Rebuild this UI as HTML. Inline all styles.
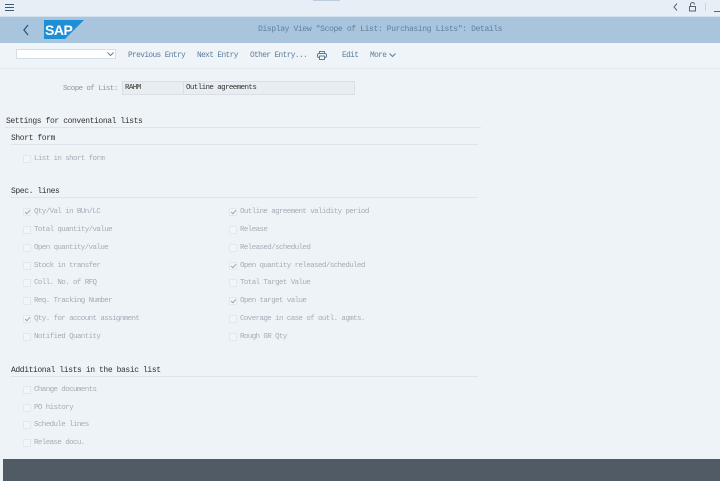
<!DOCTYPE html>
<html><head><meta charset="utf-8"><style>
*{margin:0;padding:0;box-sizing:border-box}
body{width:720px;height:481px;overflow:hidden;background:#eef3f8;font-family:"Liberation Mono","Noto Sans CJK SC",monospace;font-size:7.5px;letter-spacing:-0.6px;color:#333;position:relative}
.a{position:absolute;white-space:nowrap}
.cb{position:absolute;width:8px;height:8px;background:#f3f6f9;border:1px solid #e2e8ee;border-radius:1px}
.cb.c::after{content:"";position:absolute;left:2px;top:0px;width:2px;height:4px;border-right:1px solid #9aa8b5;border-bottom:1px solid #9aa8b5;transform:rotate(40deg)}
.l{color:#a3adb8}
.h{font-size:8px;letter-spacing:-0.4px;color:#333}
.line{position:absolute;height:1px;background:#dce4ec}
.tb{color:#5d7b99;font-size:7.8px;letter-spacing:-0.6px}
</style></head><body>
<div class="a" style="left:0;top:0;width:720px;height:16px;background:#e7eef6"></div>
<div class="a" style="left:5px;top:4px;width:9px;height:1px;background:#3e5a78;box-shadow:0 3px 0 #3e5a78,0 6px 0 #3e5a78"></div>
<div class="a" style="left:313px;top:0;width:27px;height:1px;background:#b8cde2"></div>
<svg class="a" style="left:673px;top:3px" width="5" height="8"><path d="M4 0.5L1 4l3 3.5" fill="none" stroke="#567"/></svg>
<svg class="a" style="left:688px;top:2px" width="9" height="10"><rect x="1.5" y="4.5" width="6" height="4.5" fill="none" stroke="#567"/><path d="M2.5 4.5V2.5a2 2 0 0 1 4 0" fill="none" stroke="#567"/></svg>
<div class="a" style="left:705px;top:3px;width:1px;height:8px;background:#c8d3df"></div>
<div class="a" style="left:714px;top:11px;width:6px;height:1px;background:#567"></div>
<div class="a" style="left:0;top:16px;width:720px;height:27px;background:#a9c5dd;border-top:1px solid #d2dfec"></div>
<svg class="a" style="left:22px;top:24px" width="8" height="12"><path d="M6 1L2 6l4 5" fill="none" stroke="#2f5d8a" stroke-width="1.4"/></svg>
<svg class="a" style="left:44px;top:20px" width="40" height="19"><path d="M0 0H40L21 19H0Z" fill="#1e8fd6"/><text x="1" y="15" font-family="Liberation Sans" font-weight="bold" font-size="14" letter-spacing="-0.5" fill="#fff">SAP</text></svg>
<div class="a" style="left:258px;top:25px;font-size:8px;letter-spacing:-0.36px;color:#5f80a1">Display View "Scope of List: Purchasing Lists": Details</div>
<div class="a" style="left:0;top:43px;width:720px;height:26px;background:#eff4f9;border-bottom:1px solid #e1e8ef"></div>
<div class="a" style="left:16px;top:49px;width:100px;height:10px;background:#fff;border:1px solid #d5dde6"></div>
<svg class="a" style="left:107px;top:52px" width="7" height="5"><path d="M0.5 0.5L3.5 3.5L6.5 0.5" fill="none" stroke="#6a7f95"/></svg>
<div class="a tb" style="left:128px;top:52px">Previous Entry</div>
<div class="a tb" style="left:197px;top:52px">Next Entry</div>
<div class="a tb" style="left:250px;top:52px">Other Entry...</div>
<svg class="a" style="left:317px;top:51px" width="10" height="9"><rect x="0.5" y="2.5" width="9" height="4" rx="1.5" fill="none" stroke="#5d7b99"/><rect x="2.5" y="0.5" width="5" height="2" fill="none" stroke="#5d7b99"/><rect x="2.5" y="5" width="5" height="3.5" fill="#eff4f9" stroke="#5d7b99"/></svg>
<div class="a tb" style="left:342px;top:52px">Edit</div>
<div class="a tb" style="left:370px;top:52px">More</div>
<svg class="a" style="left:389px;top:53px" width="7" height="5"><path d="M0.5 0.5L3.5 3.5L6.5 0.5" fill="none" stroke="#5d7b99"/></svg>
<div class="a l" style="left:63px;top:85px;color:#8b97a3">Scope of List:</div>
<div class="a" style="left:122px;top:81px;width:62px;height:14px;background:#e8edf1;border:1px solid #d8dfe6"></div>
<div class="a" style="left:183px;top:81px;width:172px;height:14px;background:#e8edf1;border:1px solid #d8dfe6"></div>
<div class="a" style="left:125px;top:84px">RAHM</div>
<div class="a" style="left:186px;top:84px">Outline agreements</div>
<div class="a h" style="left:6px;top:117px">Settings for conventional lists</div>
<div class="line" style="left:5px;top:127px;width:476px"></div>
<div class="a h" style="left:11px;top:134px">Short form</div>
<div class="line" style="left:11px;top:144px;width:467px"></div>
<div class="cb" style="left:23px;top:155px"></div><div class="a l" style="left:34px;top:155px">List in short form</div>
<div class="a h" style="left:11px;top:187px">Spec. lines</div>
<div class="line" style="left:11px;top:197px;width:467px"></div>
<div class="cb c" style="left:23px;top:208px"></div><div class="a l" style="left:34px;top:208px">Qty/Val in BUn/LC</div>
<div class="cb" style="left:23px;top:226px"></div><div class="a l" style="left:34px;top:226px">Total quantity/value</div>
<div class="cb" style="left:23px;top:244px"></div><div class="a l" style="left:34px;top:244px">Open quantity/value</div>
<div class="cb" style="left:23px;top:262px"></div><div class="a l" style="left:34px;top:262px">Stock in transfer</div>
<div class="cb" style="left:23px;top:279px"></div><div class="a l" style="left:34px;top:279px">Coll. No. of RFQ</div>
<div class="cb" style="left:23px;top:297px"></div><div class="a l" style="left:34px;top:297px">Req. Tracking Number</div>
<div class="cb c" style="left:23px;top:315px"></div><div class="a l" style="left:34px;top:315px">Qty. for account assignment</div>
<div class="cb" style="left:23px;top:333px"></div><div class="a l" style="left:34px;top:333px">Notified Quantity</div>
<div class="cb c" style="left:229px;top:208px"></div><div class="a l" style="left:240px;top:208px">Outline agreement validity period</div>
<div class="cb" style="left:229px;top:226px"></div><div class="a l" style="left:240px;top:226px">Release</div>
<div class="cb" style="left:229px;top:244px"></div><div class="a l" style="left:240px;top:244px">Released/scheduled</div>
<div class="cb c" style="left:229px;top:262px"></div><div class="a l" style="left:240px;top:262px">Open quantity released/scheduled</div>
<div class="cb" style="left:229px;top:279px"></div><div class="a l" style="left:240px;top:279px">Total Target Value</div>
<div class="cb c" style="left:229px;top:297px"></div><div class="a l" style="left:240px;top:297px">Open target value</div>
<div class="cb" style="left:229px;top:315px"></div><div class="a l" style="left:240px;top:315px">Coverage in case of outl. agmts.</div>
<div class="cb" style="left:229px;top:333px"></div><div class="a l" style="left:240px;top:333px">Rough GR Qty</div>
<div class="a h" style="left:11px;top:366px">Additional lists in the basic list</div>
<div class="line" style="left:11px;top:376px;width:467px"></div>
<div class="cb" style="left:23px;top:386px"></div><div class="a l" style="left:34px;top:386px">Change documents</div>
<div class="cb" style="left:23px;top:404px"></div><div class="a l" style="left:34px;top:404px">PO history</div>
<div class="cb" style="left:23px;top:421px"></div><div class="a l" style="left:34px;top:421px">Schedule lines</div>
<div class="cb" style="left:23px;top:439px"></div><div class="a l" style="left:34px;top:439px">Release docu.</div>
<div class="a" style="left:3px;top:459px;width:717px;height:22px;background:#515b66"></div>
</body></html>
